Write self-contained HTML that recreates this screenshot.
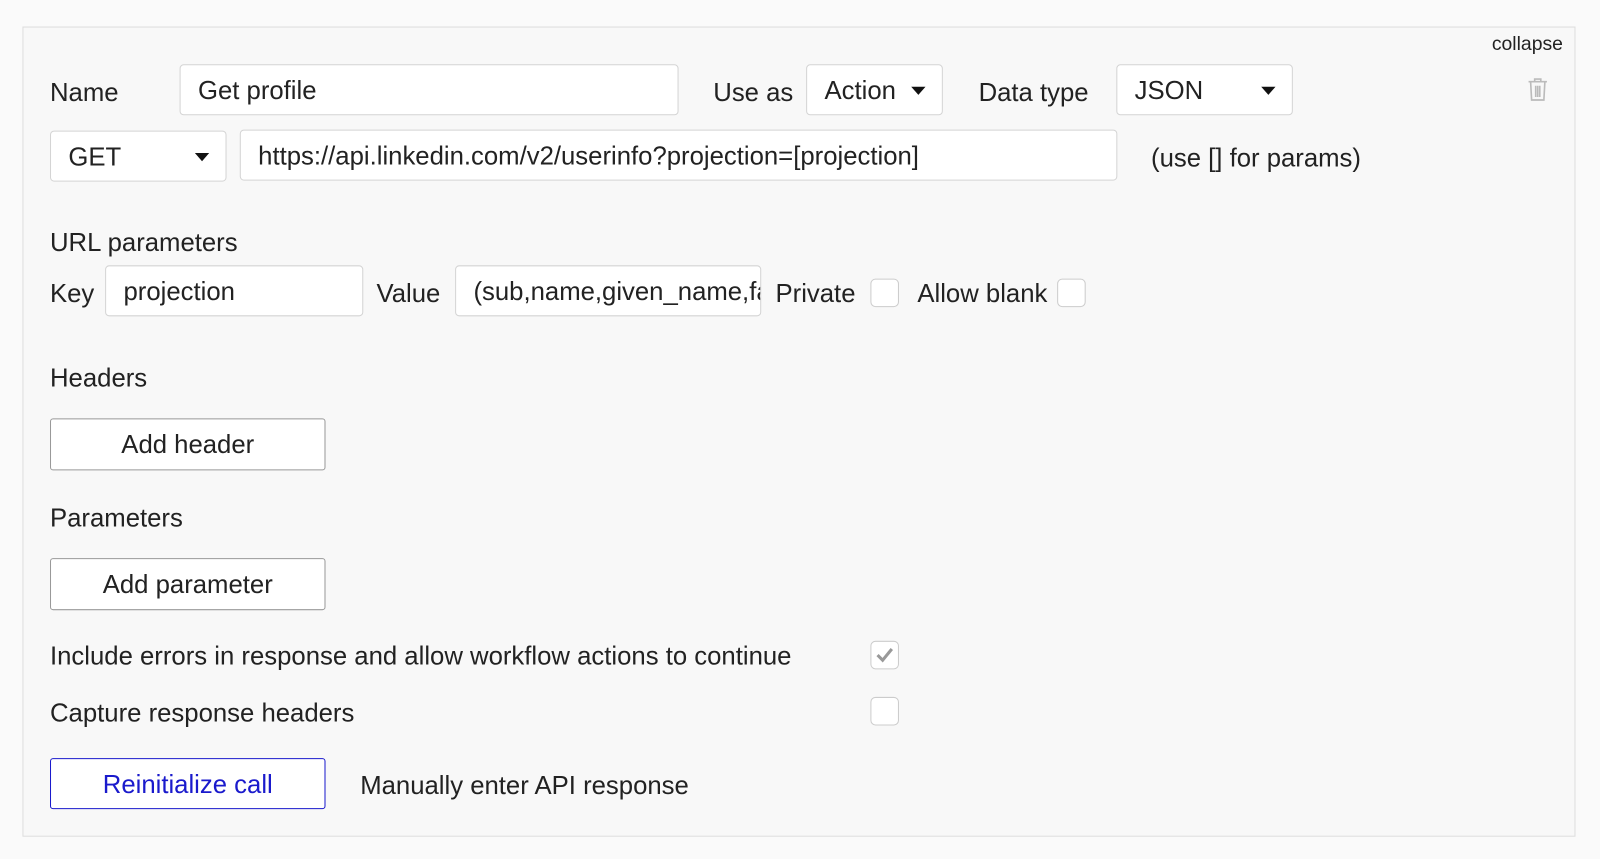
<!DOCTYPE html>
<html><head><style>
body{margin:0;width:1600px;height:859px;background:#fafafa;font-family:"Liberation Sans",sans-serif;color:#222;position:relative;overflow:hidden}
#w{position:absolute;left:0;top:0;width:1568px;height:842px;transform:scale(1.0204);transform-origin:0 0}
.p{position:absolute;left:22px;top:26px;width:1520px;height:792px;border:1px solid #ddd;background:#f8f8f8}
.a{position:absolute;white-space:nowrap;font-size:25.2px;line-height:28px}
.box{position:absolute;background:#fff;border:1px solid #d4d4d4;border-radius:4px;box-sizing:border-box;font-size:25.2px;padding-left:17px;padding-top:3px;display:flex;align-items:center;overflow:hidden;white-space:nowrap}
.caret{position:absolute;right:16px;top:50%;margin-top:-3px;border-left:7px solid transparent;border-right:7px solid transparent;border-top:8px solid #111}
.cb{position:absolute;width:28px;height:28px;background:#fff;border:1px solid #ccc;border-radius:5px;box-sizing:border-box}
.btn{position:absolute;background:#fff;border:1px solid #999;border-radius:3px;box-sizing:border-box;font-size:25.2px;padding-top:2px;display:flex;align-items:center;justify-content:center}
</style></head><body><div id="w">
<div class="p"></div>
<div class="a" style="left:1462px;top:30px;font-size:19px">collapse</div>
<svg style="position:absolute;left:1497px;top:76px" width="20" height="24" viewBox="0 0 20 24"><g fill="none" stroke="#bbb" stroke-width="1.6"><path d="M1 4h18M7 4V1.5h6V4M3 4l1 18h12l1-18M8 8v11M10 8v11M12 8v11"/></g></svg>
<div class="a" style="left:49px;top:77px">Name</div>
<div class="box" style="left:176px;top:63px;width:489px;height:50px">Get profile</div>
<div class="a" style="left:699px;top:77px">Use as</div>
<div class="box" style="left:790px;top:63px;width:134px;height:50px">Action<span class="caret"></span></div>
<div class="a" style="left:959px;top:77px">Data type</div>
<div class="box" style="left:1094px;top:63px;width:173px;height:50px">JSON<span class="caret"></span></div>
<div class="box" style="left:49px;top:128px;width:173px;height:50px">GET<span class="caret"></span></div>
<div class="box" style="left:235px;top:127px;width:860px;height:50px">https://api.linkedin.com/v2/userinfo?projection=[projection]</div>
<div class="a" style="left:1128px;top:141px">(use [] for params)</div>
<div class="a" style="left:49px;top:224px">URL parameters</div>
<div class="a" style="left:49px;top:274px">Key</div>
<div class="box" style="left:103px;top:260px;width:253px;height:50px">projection</div>
<div class="a" style="left:369px;top:274px">Value</div>
<div class="box" style="left:446px;top:260px;width:300px;height:50px">(sub,name,given_name,family_name)</div>
<div class="a" style="left:760px;top:274px">Private</div>
<div class="cb" style="left:853px;top:273px"></div>
<div class="a" style="left:899px;top:274px">Allow blank</div>
<div class="cb" style="left:1036px;top:273px"></div>
<div class="a" style="left:49px;top:357px">Headers</div>
<div class="btn" style="left:49px;top:410px;width:270px;height:51px">Add header</div>
<div class="a" style="left:49px;top:494px">Parameters</div>
<div class="btn" style="left:49px;top:547px;width:270px;height:51px">Add parameter</div>
<div class="a" style="left:49px;top:629px">Include errors in response and allow workflow actions to continue</div>
<div class="cb" style="left:853px;top:628px"><svg width="26" height="26" viewBox="0 0 26 26" style="position:absolute;left:0;top:0"><path d="M6 13l5 5 9-11" fill="none" stroke="#999" stroke-width="3"/></svg></div>
<div class="a" style="left:49px;top:685px">Capture response headers</div>
<div class="cb" style="left:853px;top:683px"></div>
<div class="btn" style="left:49px;top:743px;width:270px;height:50px;border-color:#1a1acc;color:#1a1acc">Reinitialize call</div>
<div class="a" style="left:353px;top:756px">Manually enter API response</div>
</div></body></html>
